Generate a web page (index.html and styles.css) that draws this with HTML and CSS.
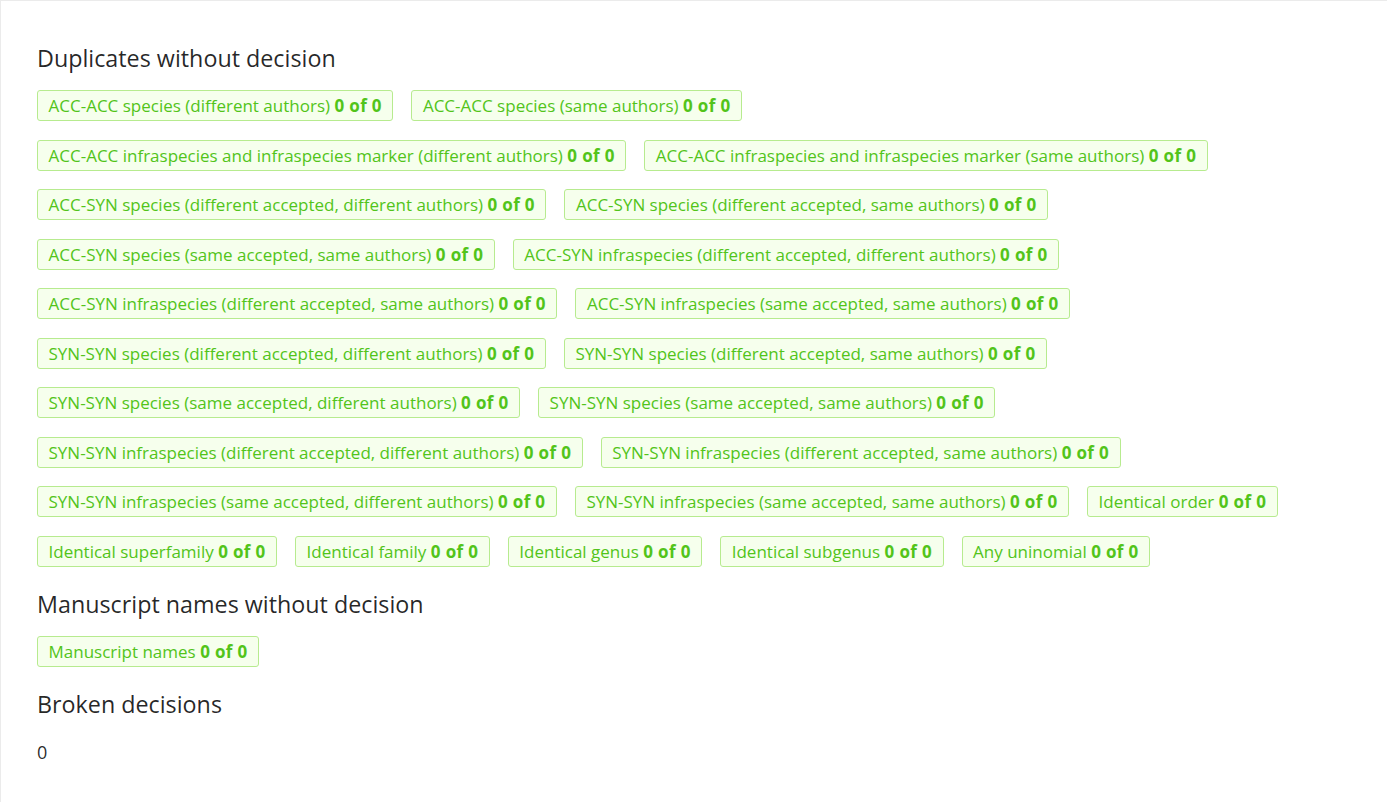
FILE: index.html
```html
<!DOCTYPE html>
<html lang="en">
<head>
<meta charset="utf-8">
<title>Duplicates</title>
<link rel="stylesheet" href="styles.css">
</head>
<body>
<div class="card">
  <h3 class="title">Duplicates without decision</h3>
  <div class="tags">
    <span class="tag">ACC-ACC species (different authors) <b>0 of 0</b></span>
    <span class="tag">ACC-ACC species (same authors) <b>0 of 0</b></span>
    <span class="tag">ACC-ACC infraspecies and infraspecies marker (different authors) <b>0 of 0</b></span>
    <span class="tag">ACC-ACC infraspecies and infraspecies marker (same authors) <b>0 of 0</b></span>
    <span class="tag">ACC-SYN species (different accepted, different authors) <b>0 of 0</b></span>
    <span class="tag">ACC-SYN species (different accepted, same authors) <b>0 of 0</b></span>
    <span class="tag">ACC-SYN species (same accepted, same authors) <b>0 of 0</b></span>
    <span class="tag">ACC-SYN infraspecies (different accepted, different authors) <b>0 of 0</b></span>
    <span class="tag">ACC-SYN infraspecies (different accepted, same authors) <b>0 of 0</b></span>
    <span class="tag">ACC-SYN infraspecies (same accepted, same authors) <b>0 of 0</b></span>
    <span class="tag">SYN-SYN species (different accepted, different authors) <b>0 of 0</b></span>
    <span class="tag">SYN-SYN species (different accepted, same authors) <b>0 of 0</b></span>
    <span class="tag">SYN-SYN species (same accepted, different authors) <b>0 of 0</b></span>
    <span class="tag">SYN-SYN species (same accepted, same authors) <b>0 of 0</b></span>
    <span class="tag">SYN-SYN infraspecies (different accepted, different authors) <b>0 of 0</b></span>
    <span class="tag">SYN-SYN infraspecies (different accepted, same authors) <b>0 of 0</b></span>
    <span class="tag">SYN-SYN infraspecies (same accepted, different authors) <b>0 of 0</b></span>
    <span class="tag">SYN-SYN infraspecies (same accepted, same authors) <b>0 of 0</b></span>
    <span class="tag">Identical order <b>0 of 0</b></span>
    <span class="tag">Identical superfamily <b>0 of 0</b></span>
    <span class="tag">Identical family <b>0 of 0</b></span>
    <span class="tag">Identical genus <b>0 of 0</b></span>
    <span class="tag">Identical subgenus <b>0 of 0</b></span>
    <span class="tag">Any uninomial <b>0 of 0</b></span>
  </div>
  <h3 class="title">Manuscript names without decision</h3>
  <div class="tags">
    <span class="tag">Manuscript names <b>0 of 0</b></span>
  </div>
  <h3 class="title">Broken decisions</h3>
  <p class="count">0</p>
</div>
</body>
</html>
```

FILE: styles.css
```css
html, body {
  margin: 0;
  padding: 0;
  background: #ffffff;
}
body {
  font-family: "Open Sans", "Noto Sans", sans-serif;
  color: rgba(0, 0, 0, 0.85);
  overflow: hidden;
}
.card {
  box-sizing: border-box;
  min-height: 802px;
  border-top: 1px solid #ebebeb;
  border-left: 1px solid #ebebeb;
  padding: 41px 60px 24px 36px;
}
.title {
  margin: 0 0 16px 0;
  font-size: 23.3px;
  line-height: 32px;
  font-weight: 400;
  color: rgba(0, 0, 0, 0.85);
}
.tags {
  display: flex;
  flex-wrap: wrap;
  gap: 18.5px 18px;
  margin-bottom: 21px;
}
.tag {
  display: inline-block;
  font-size: 17px;
  line-height: 29px;
  padding: 0 10.5px 0 10.5px;
  border: 1px solid #b7eb8f;
  background: #f6ffed;
  color: #52c41a;
  border-radius: 3px;
  white-space: nowrap;
}
.tag b {
  font-weight: 700;
  letter-spacing: 0.35px;
}
.count {
  margin: 20px 0 0 0;
  font-size: 18px;
  line-height: 24px;
}
```
